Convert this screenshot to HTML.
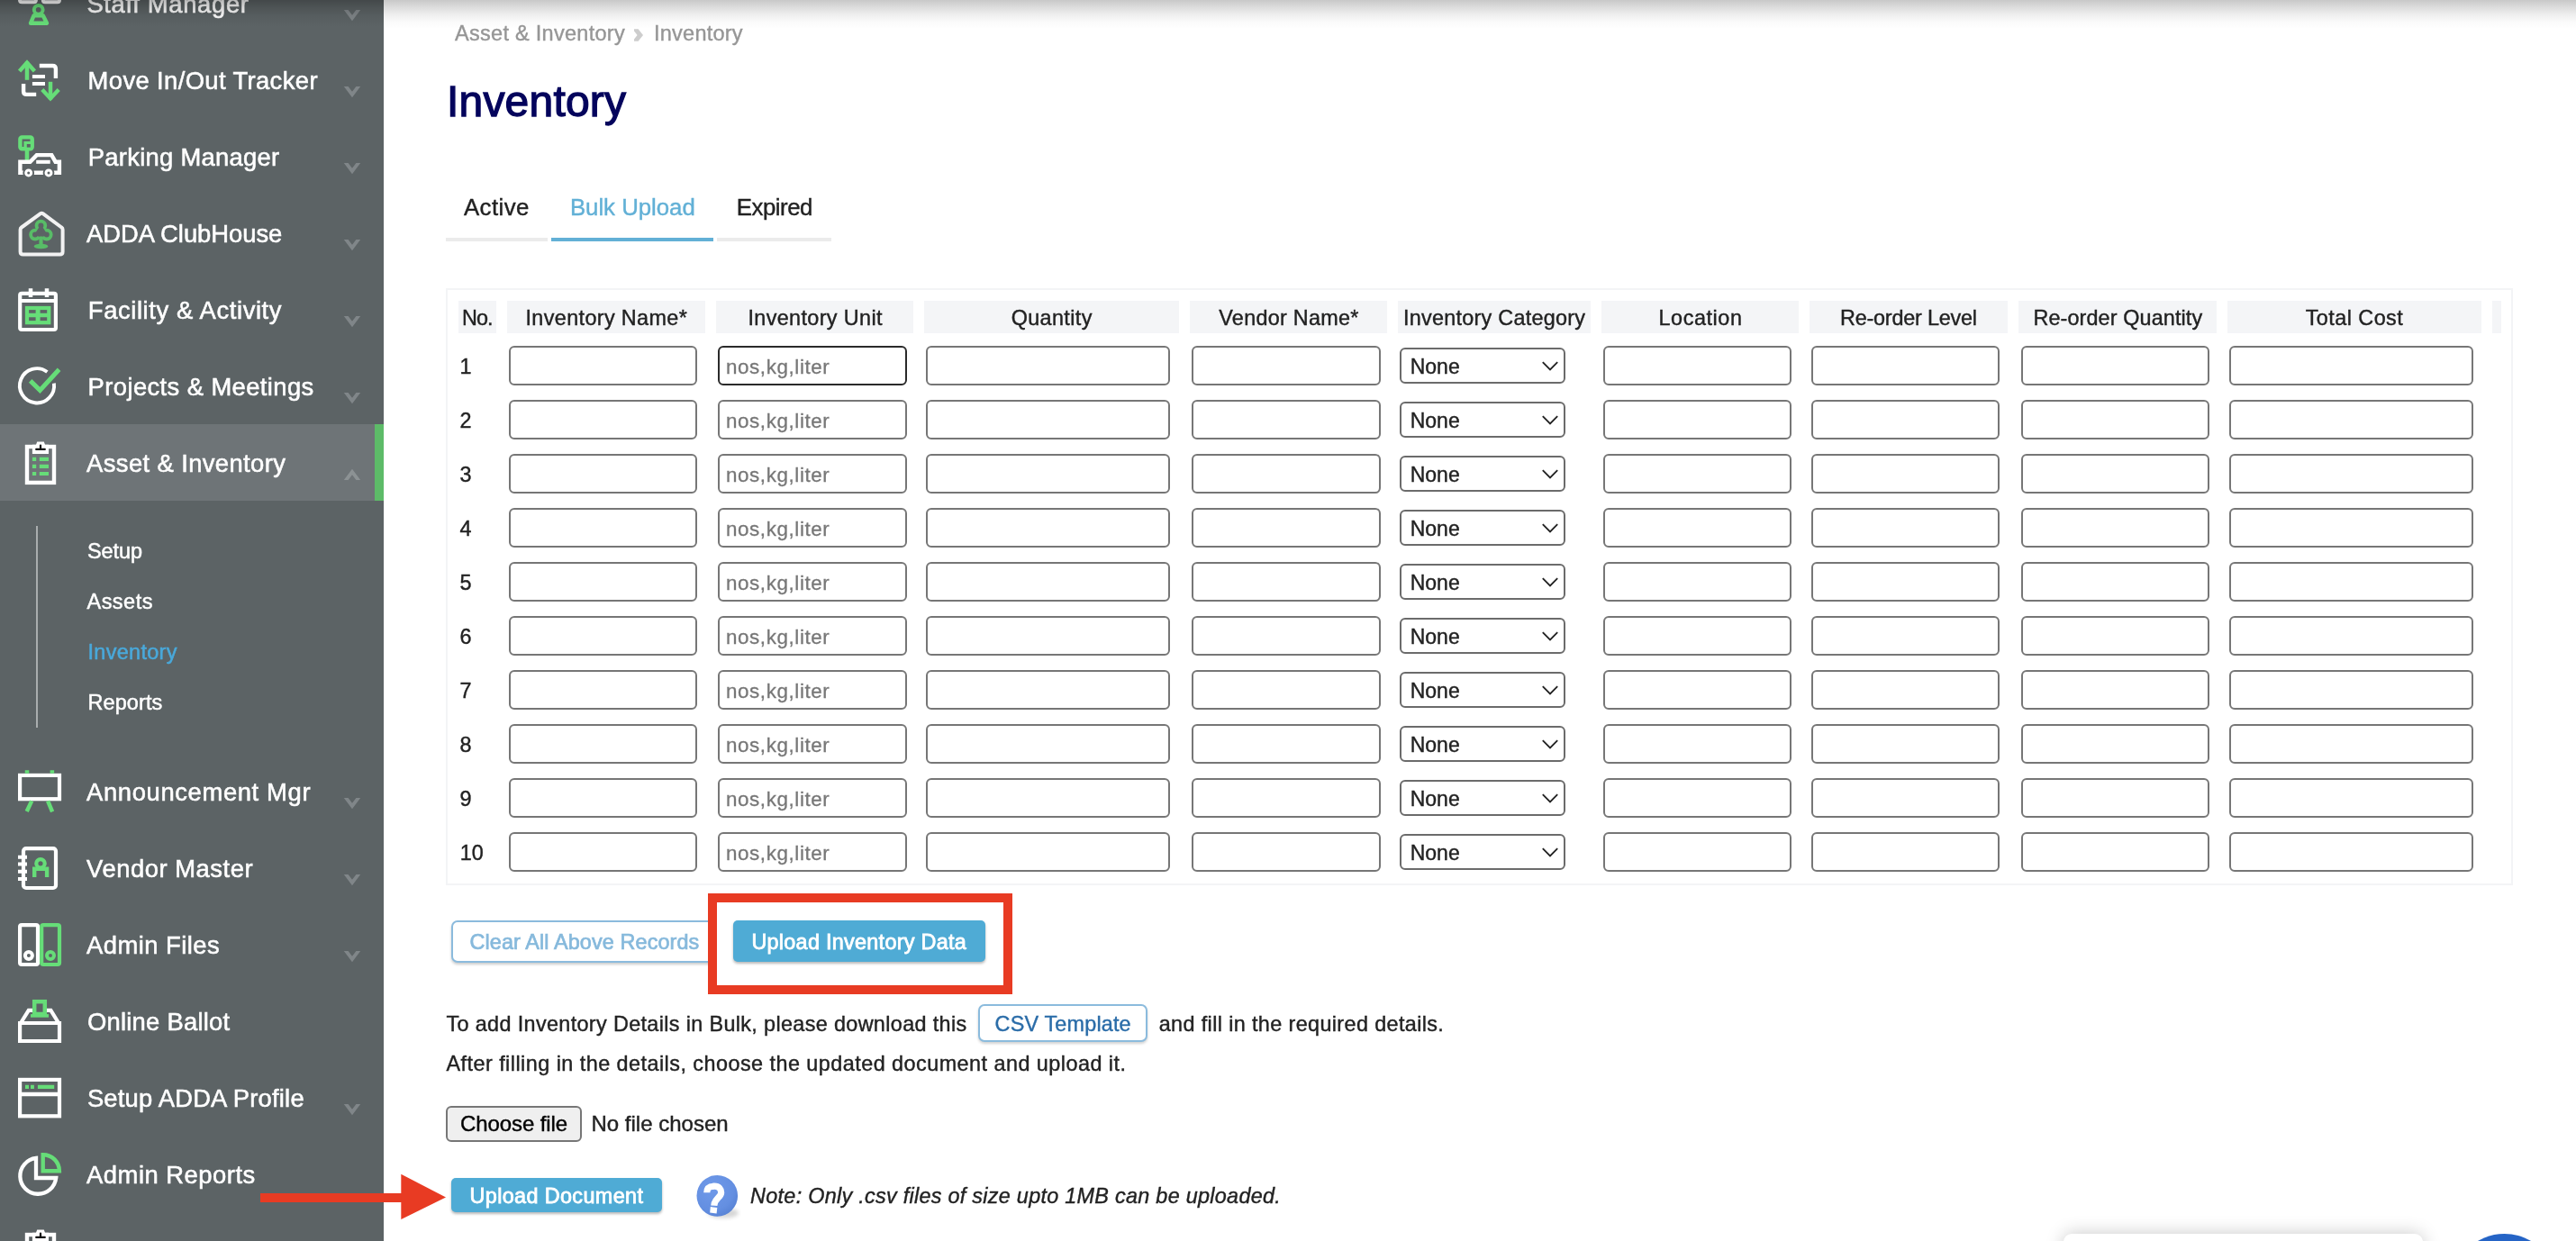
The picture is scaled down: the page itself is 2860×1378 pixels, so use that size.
<!DOCTYPE html>
<html><head><meta charset="utf-8"><title>Inventory</title>
<style>
*{box-sizing:border-box;margin:0;padding:0}
html,body{width:2860px;height:1378px;overflow:hidden;background:#fff;font-family:"Liberation Sans",sans-serif;}
body{position:relative}
#layer{position:absolute;left:0;top:0;width:2860px;height:1378px;overflow:hidden;will-change:transform}
.t{position:absolute;white-space:nowrap}
.abs{position:absolute}
#sb{position:absolute;left:0;top:0;width:426px;height:1378px;background:#5c6365;overflow:hidden}
#sb .act{position:absolute;left:0;top:471px;width:426px;height:85px;background:#6e7477}
#sb .actbar{position:absolute;left:416px;top:471px;width:10px;height:85px;background:#5dbb68}
#sb .vline{position:absolute;left:40px;top:584px;width:2px;height:224px;background:#a9adae}
.sbshadow{position:absolute;left:0;top:0;width:426px;height:30px;background:linear-gradient(to bottom,rgba(0,0,0,.27),rgba(0,0,0,.15) 30%,rgba(0,0,0,.06) 60%,rgba(0,0,0,0))}
.topshadow{position:absolute;left:426px;top:0;width:2434px;height:32px;background:linear-gradient(to bottom,#c8c8c8 0,#dcdcdc 25%,#eeeeee 50%,#fafafa 75%,#fff 100%)}
.ul{position:absolute;top:264px;height:4px;background:#ebebeb}
.ul.on{background:#62b0d6}
.tbl{position:absolute;left:495px;top:320px;width:2295px;height:663px;border:2px solid #f3f4f6}
.th{position:absolute;top:334px;height:36px;background:#f4f5f7}
.inp{position:absolute;height:43.4px;border:2px solid #767676;border-radius:6px;background:#fff}
.inp.foc{border-color:#2a2a2a}
.sel{position:absolute;width:183.6px;height:39.6px;border:2px solid #6b6b6b;border-radius:6px;background:#fff}
.btn{position:absolute;background:#4fabd5;border-radius:5px;box-shadow:0 2px 3px rgba(0,0,0,.28)}
.btn-o{position:absolute;background:#fff;border:2px solid #8bbbdd;border-radius:7px;box-shadow:0 2px 3px rgba(0,0,0,.2)}
.redbox{position:absolute;left:786px;top:992px;width:338px;height:111.6px;border:10px solid #e83b23;background:#fff}
.csv{position:absolute;left:1086px;top:1114.5px;width:187.5px;height:42.5px;border:2px solid #8bbbdd;border-radius:7px;background:#fff;box-shadow:0 2px 3px rgba(0,0,0,.18)}
.cf{position:absolute;left:495.2px;top:1228px;width:151.2px;height:39.5px;border:2px solid #767676;border-radius:6px;background:#efefef}
.card{position:absolute;left:2290.5px;top:1369.8px;width:399.5px;height:60px;background:#fff;border-radius:9px;box-shadow:0 0 20px rgba(0,0,0,.22)}
.fab{position:absolute;left:2721.5px;top:1369.8px;width:117px;height:117px;border-radius:50%;background:#2564c6}

</style></head>
<body>
<div id="layer">
<div id="sb"><div class="act"></div><div class="actbar"></div><div class="vline"></div></div>
<div class="t" style="left:96.40px;top:-13.50px;font-size:27.4px;line-height:36px;color:#fff;letter-spacing:0.666px;-webkit-text-stroke:0.55px #fff;">Staff Manager</div>
<div class="t" style="left:97.60px;top:71.50px;font-size:27.4px;line-height:36px;color:#fff;letter-spacing:0.377px;-webkit-text-stroke:0.55px #fff;">Move In/Out Tracker</div>
<div class="t" style="left:97.80px;top:156.50px;font-size:27.4px;line-height:36px;color:#fff;letter-spacing:0.275px;-webkit-text-stroke:0.55px #fff;">Parking Manager</div>
<div class="t" style="left:96.10px;top:241.50px;font-size:27.4px;line-height:36px;color:#fff;letter-spacing:-0.037px;-webkit-text-stroke:0.55px #fff;">ADDA ClubHouse</div>
<div class="t" style="left:97.80px;top:326.50px;font-size:27.4px;line-height:36px;color:#fff;letter-spacing:0.599px;-webkit-text-stroke:0.55px #fff;">Facility &amp; Activity</div>
<div class="t" style="left:97.60px;top:411.50px;font-size:27.4px;line-height:36px;color:#fff;letter-spacing:0.396px;-webkit-text-stroke:0.55px #fff;">Projects &amp; Meetings</div>
<div class="t" style="left:96.10px;top:496.50px;font-size:27.4px;line-height:36px;color:#fff;letter-spacing:0.385px;-webkit-text-stroke:0.55px #fff;">Asset &amp; Inventory</div>
<div class="t" style="left:96.10px;top:861.50px;font-size:27.4px;line-height:36px;color:#fff;letter-spacing:0.625px;-webkit-text-stroke:0.55px #fff;">Announcement Mgr</div>
<div class="t" style="left:96.10px;top:946.50px;font-size:27.4px;line-height:36px;color:#fff;letter-spacing:0.526px;-webkit-text-stroke:0.55px #fff;">Vendor Master</div>
<div class="t" style="left:96.10px;top:1031.50px;font-size:27.4px;line-height:36px;color:#fff;letter-spacing:0.446px;-webkit-text-stroke:0.55px #fff;">Admin Files</div>
<div class="t" style="left:96.90px;top:1116.50px;font-size:27.4px;line-height:36px;color:#fff;letter-spacing:0.245px;-webkit-text-stroke:0.55px #fff;">Online Ballot</div>
<div class="t" style="left:96.90px;top:1201.50px;font-size:27.4px;line-height:36px;color:#fff;letter-spacing:0.189px;-webkit-text-stroke:0.55px #fff;">Setup ADDA Profile</div>
<div class="t" style="left:96.10px;top:1286.50px;font-size:27.4px;line-height:36px;color:#fff;letter-spacing:0.498px;-webkit-text-stroke:0.55px #fff;">Admin Reports</div>
<div class="t" style="left:96.90px;top:597.30px;font-size:23.5px;line-height:31px;color:#fff;letter-spacing:-0.051px;-webkit-text-stroke:0.5px #fff;">Setup</div>
<div class="t" style="left:96.50px;top:653.30px;font-size:23.5px;line-height:31px;color:#fff;letter-spacing:0.475px;-webkit-text-stroke:0.5px #fff;">Assets</div>
<div class="t" style="left:97.50px;top:709.30px;font-size:23.5px;line-height:31px;color:#49a9db;letter-spacing:0.281px;-webkit-text-stroke:0.5px #49a9db;">Inventory</div>
<div class="t" style="left:97.50px;top:765.10px;font-size:23.5px;line-height:31px;color:#fff;letter-spacing:0.088px;-webkit-text-stroke:0.5px #fff;">Reports</div>
<svg class="abs" style="left:0;top:0" width="426" height="1378" viewBox="0 0 426 1378" fill="none" stroke-width="4.2" stroke-linejoin="round"><path d="M381.8 11 H386.6 L391 16.8 L395.4 11 H400.2 L391 23.2 Z" fill="#808689" stroke="none"/><path d="M381.8 96 H386.6 L391 101.8 L395.4 96 H400.2 L391 108.2 Z" fill="#808689" stroke="none"/><path d="M381.8 181 H386.6 L391 186.8 L395.4 181 H400.2 L391 193.2 Z" fill="#808689" stroke="none"/><path d="M381.8 266 H386.6 L391 271.8 L395.4 266 H400.2 L391 278.2 Z" fill="#808689" stroke="none"/><path d="M381.8 351 H386.6 L391 356.8 L395.4 351 H400.2 L391 363.2 Z" fill="#808689" stroke="none"/><path d="M381.8 436 H386.6 L391 441.8 L395.4 436 H400.2 L391 448.2 Z" fill="#808689" stroke="none"/><path d="M381.8 533 H386.6 L391 527.2 L395.4 533 H400.2 L391 520.8 Z" fill="#8c9294" stroke="none"/><path d="M381.8 886 H386.6 L391 891.8 L395.4 886 H400.2 L391 898.2 Z" fill="#808689" stroke="none"/><path d="M381.8 971 H386.6 L391 976.8 L395.4 971 H400.2 L391 983.2 Z" fill="#808689" stroke="none"/><path d="M381.8 1056 H386.6 L391 1061.8 L395.4 1056 H400.2 L391 1068.2 Z" fill="#808689" stroke="none"/><path d="M381.8 1226 H386.6 L391 1231.8 L395.4 1226 H400.2 L391 1238.2 Z" fill="#808689" stroke="none"/><path d="M22 -4 V0 Q22 2.2 24.2 2.2 H37.7 Q39.9 2.2 39.9 0 V-4 M47.8 -4 V0 Q47.8 2.2 50 2.2 H63.8 Q66 2.2 66 0 V-4" stroke="#ffffff" stroke-width="4"/><circle cx="42.7" cy="10.8" r="4.9" stroke="#66dd78" stroke-width="4"/><path d="M34 25.8 L37.6 17.2 H47.8 L52 25.8 Z" stroke="#66dd78" stroke-width="4.4"/><path d="M30 88.8 V68.5" stroke="#66dd78" stroke-width="4.5"/><path d="M21.6 79 L30 69.6 L38.4 79" stroke="#66dd78" stroke-width="4.4" stroke-linejoin="miter"/><path d="M56 90.8 V110.5" stroke="#66dd78" stroke-width="4.5"/><path d="M46.8 99.6 L56 109.4 L65.2 99.6" stroke="#66dd78" stroke-width="4.4" stroke-linejoin="miter"/><path d="M43.8 73 H58.4 Q61.9 73 61.9 76.5 V87.1" stroke="#ffffff" stroke-width="4.4"/><path d="M26.1 93.1 V101.4 Q26.1 104.9 29.6 104.9 H40.2" stroke="#ffffff" stroke-width="4.4"/><path d="M35.9 84.9 H50 M35.9 93.1 H50" stroke="#ffffff" stroke-width="4"/><rect x="22.4" y="152.4" width="13.3" height="12.8" rx="2" stroke="#66dd78" stroke-width="4.4"/><rect x="26.4" y="156.9" width="9" height="8" fill="#66dd78" stroke="none"/><rect x="29.8" y="160" width="4" height="3.6" fill="#5c6365" stroke="none"/><path d="M30 167 V178.4" stroke="#66dd78" stroke-width="4.6"/><path d="M22.4 179.7 H33.4 L40.8 172.1 H57.3 L61.6 179.7 H65.9 V191.7 H22.4 Z" stroke="#ffffff" stroke-width="4.4" stroke-linejoin="miter"/><path d="M40.2 179.8 H55.7" stroke="#ffffff" stroke-width="4"/><circle cx="31.7" cy="191.9" r="6.4" fill="#5c6365" stroke="none"/><circle cx="31.7" cy="191.9" r="3" stroke="#ffffff" stroke-width="3"/><circle cx="54" cy="191.9" r="6.4" fill="#5c6365" stroke="none"/><circle cx="54" cy="191.9" r="3" stroke="#ffffff" stroke-width="3"/><path d="M22.6 279.6 V255 Q22.6 253.4 23.9 252.5 L45 237.2 Q46.3 236.3 47.6 237.2 L68.3 252.5 Q69.6 253.4 69.6 255 V279.6 Q69.6 282.6 66.6 282.6 H25.6 Q22.6 282.6 22.6 279.6 Z" stroke="#f2f2f2" stroke-width="4"/><circle cx="45.4" cy="250.6" r="4.9" stroke="#58bc67" stroke-width="3.8"/><circle cx="39" cy="260.6" r="4.9" stroke="#58bc67" stroke-width="3.8"/><circle cx="51.8" cy="260.6" r="4.9" stroke="#58bc67" stroke-width="3.8"/><path d="M45.4 252 L40.5 259.5 L45.4 262.5 L50.3 259.5 Z" fill="#5c6365" stroke="#5c6365" stroke-width="3"/><path d="M45.5 262.5 V273" stroke="#58bc67" stroke-width="4.2"/><ellipse cx="45.5" cy="273.5" rx="7.9" ry="2.8" fill="#58bc67" stroke="none"/><rect x="22.2" y="325.9" width="39.7" height="40.1" rx="2" stroke="#ffffff" stroke-width="4.2"/><path d="M34 320.2 V330 M52 320.2 V330" stroke="#ffffff" stroke-width="4.5"/><path d="M22.2 334 H61.9" stroke="#ffffff" stroke-width="4"/><rect x="30" y="342" width="24.3" height="16.2" stroke="#66dd78" stroke-width="4.2" stroke-linejoin="miter"/><path d="M42.1 342 V358.2" stroke="#66dd78" stroke-width="5"/><path d="M30 350 H54.3" stroke="#66dd78" stroke-width="4.5"/><path d="M52.4 413 A19.1 19.1 0 1 0 59.9 425.6" stroke="#ffffff" stroke-width="3.9"/><path d="M33.7 422.9 L44.4 433.4 L65.6 410.2" stroke="#66dd78" stroke-width="5" stroke-linejoin="miter"/><g transform="translate(0,0)"><rect x="30" y="496" width="30" height="39.9" stroke="#ffffff" stroke-width="4.4" stroke-linejoin="miter"/><path d="M35.9 493.8 H40 L41.2 490.6 H48.8 L50 493.8 H54 V504 H35.9 Z" fill="#ffffff" stroke="none"/><path d="M40.2 498.9 H49.8 M45 494.6 V498.9" stroke="#111" stroke-width="2.2" stroke-linecap="round"/><path d="M35.9 509.9 H40.2 M43.8 509.9 H54" stroke="#66dd78" stroke-width="4.2"/><path d="M35.9 517.9 H40.2 M43.8 517.9 H54" stroke="#66dd78" stroke-width="4.2"/><path d="M35.9 526 H40.2 M43.8 526 H54" stroke="#66dd78" stroke-width="4.2"/></g><rect x="22.1" y="860.9" width="43.9" height="26.3" stroke="#ffffff" stroke-width="4.2" stroke-linejoin="miter"/><path d="M30 855.2 V858.8 M57.9 855.2 V858.8 M35.2 889.4 L29.7 901 M53.1 889.4 L58.1 901.4" stroke="#66dd78" stroke-width="4.5"/><rect x="26" y="942.2" width="36" height="43.8" rx="3" stroke="#ffffff" stroke-width="4.2"/><path d="M20 951.7 H30 M20 959.6 H30 M20 967.8 H30 M20 976 H30" stroke="#ffffff" stroke-width="4"/><circle cx="45" cy="958.8" r="4.7" stroke="#66dd78" stroke-width="4.2"/><path d="M38.2 974 V964.8 H52.1 V974" stroke="#66dd78" stroke-width="4.4" stroke-linejoin="miter"/><rect x="22.1" y="1027.1" width="19.9" height="43.9" rx="2" stroke="#ffffff" stroke-width="4.2"/><circle cx="31.9" cy="1061" r="4" stroke="#ffffff" stroke-width="4"/><rect x="46.2" y="1027.1" width="19.8" height="43.9" rx="2" stroke="#66dd78" stroke-width="4.2"/><circle cx="56" cy="1061" r="4" stroke="#66dd78" stroke-width="4"/><path d="M22.1 1136 H66 V1156 H22.1 Z" stroke="#ffffff" stroke-width="4.2" stroke-linejoin="miter"/><path d="M23.6 1135 L31.8 1121.9 H36 M64.5 1135 L56.4 1121.9 H52" stroke="#ffffff" stroke-width="4.2" stroke-linejoin="miter"/><rect x="38.2" y="1112.2" width="11.6" height="13.8" stroke="#66dd78" stroke-width="4.5" stroke-linejoin="miter"/><path d="M34 1127.9 H54" stroke="#66dd78" stroke-width="3.6"/><rect x="22.1" y="1198.9" width="43.9" height="40.4" stroke="#ffffff" stroke-width="4.2" stroke-linejoin="miter"/><path d="M22.1 1214.9 H66" stroke="#ffffff" stroke-width="4.5"/><path d="M28 1206.9 H32 M34 1206.9 H37.9 M41.9 1206.9 H60.2" stroke="#66dd78" stroke-width="4.2"/><path d="M40 1285.9 V1308 H62.2 A20 20 0 1 1 40 1285.9 Z" stroke="#ffffff" stroke-width="4.3" stroke-linejoin="miter"/><path d="M47.7 1282.2 V1300.2 H65.9 A18.1 18.1 0 0 0 47.7 1282.2 Z" stroke="#66dd78" stroke-width="4.4" stroke-linejoin="miter"/><g transform="translate(0,875)"><rect x="30" y="496" width="30" height="39.9" stroke="#ffffff" stroke-width="4.4" stroke-linejoin="miter"/><path d="M35.9 493.8 H40 L41.2 490.6 H48.8 L50 493.8 H54 V504 H35.9 Z" fill="#ffffff" stroke="none"/><path d="M40.2 498.9 H49.8 M45 494.6 V498.9" stroke="#111" stroke-width="2.2" stroke-linecap="round"/><path d="M35.9 509.9 H40.2 M43.8 509.9 H54" stroke="#66dd78" stroke-width="4.2"/><path d="M35.9 517.9 H40.2 M43.8 517.9 H54" stroke="#66dd78" stroke-width="4.2"/><path d="M35.9 526 H40.2 M43.8 526 H54" stroke="#66dd78" stroke-width="4.2"/></g></svg>
<div class="sbshadow"></div>
<div class="topshadow"></div>
<div class="t" style="left:505.00px;top:21.50px;font-size:23.5px;line-height:31px;color:#969696;letter-spacing:0.283px;-webkit-text-stroke:0.4px #969696;">Asset &amp; Inventory</div>
<svg class="abs" style="left:700px;top:28px" width="20" height="22" viewBox="700 28 20 22"><path d="M704 32.2 L708.6 32.2 L714 39 L708.6 45.8 L704 45.8 L704 43.4 L707.6 39 L704 34.6 Z" fill="#cdcdcd"/></svg>
<div class="t" style="left:726.00px;top:21.50px;font-size:23.5px;line-height:31px;color:#969696;letter-spacing:0.243px;-webkit-text-stroke:0.4px #969696;">Inventory</div>
<div class="t" style="left:496.00px;top:81.70px;font-size:48px;line-height:62px;color:#04045c;letter-spacing:0.197px;-webkit-text-stroke:1.3px #04045c;">Inventory</div>
<div class="ul" style="left:495px;width:113px"></div><div class="ul on" style="left:612px;width:180px"></div><div class="ul" style="left:796px;width:127px"></div>
<div class="t" style="left:515.00px;top:212.90px;font-size:25.8px;line-height:34px;color:#222;letter-spacing:0.409px;-webkit-text-stroke:0.4px #222;">Active</div>
<div class="t" style="left:632.90px;top:212.90px;font-size:25.8px;line-height:34px;color:#62b0d6;letter-spacing:-0.021px;-webkit-text-stroke:0.4px #62b0d6;">Bulk Upload</div>
<div class="t" style="left:817.70px;top:212.90px;font-size:25.8px;line-height:34px;color:#222;letter-spacing:-0.448px;-webkit-text-stroke:0.4px #222;">Expired</div>
<div class="tbl"></div>
<div class="th" style="left:509px;width:42px"></div>
<div class="th" style="left:563px;width:220px"></div>
<div class="th" style="left:795px;width:219px"></div>
<div class="th" style="left:1026px;width:283px"></div>
<div class="th" style="left:1321px;width:219px"></div>
<div class="th" style="left:1552px;width:214px"></div>
<div class="th" style="left:1778px;width:219px"></div>
<div class="th" style="left:2009px;width:220px"></div>
<div class="th" style="left:2241px;width:220px"></div>
<div class="th" style="left:2473px;width:282px"></div>
<div class="th" style="left:2767px;width:10px"></div>
<div class="t" style="left:513.00px;top:337.90px;font-size:23.4px;line-height:30px;color:#222;letter-spacing:-1.005px;-webkit-text-stroke:0.4px #222;">No.</div>
<div class="t" style="left:583.50px;top:337.90px;font-size:23.4px;line-height:30px;color:#222;letter-spacing:0.365px;-webkit-text-stroke:0.4px #222;">Inventory Name*</div>
<div class="t" style="left:830.40px;top:337.90px;font-size:23.4px;line-height:30px;color:#222;letter-spacing:0.365px;-webkit-text-stroke:0.4px #222;">Inventory Unit</div>
<div class="t" style="left:1122.70px;top:337.90px;font-size:23.4px;line-height:30px;color:#222;letter-spacing:0.365px;-webkit-text-stroke:0.4px #222;">Quantity</div>
<div class="t" style="left:1353.30px;top:337.90px;font-size:23.4px;line-height:30px;color:#222;letter-spacing:0.264px;-webkit-text-stroke:0.4px #222;">Vendor Name*</div>
<div class="t" style="left:1558.00px;top:337.90px;font-size:23.4px;line-height:30px;color:#222;letter-spacing:0.253px;-webkit-text-stroke:0.4px #222;">Inventory Category</div>
<div class="t" style="left:1841.50px;top:337.90px;font-size:23.4px;line-height:30px;color:#222;letter-spacing:0.575px;-webkit-text-stroke:0.4px #222;">Location</div>
<div class="t" style="left:2043.00px;top:337.90px;font-size:23.4px;line-height:30px;color:#222;letter-spacing:-0.213px;-webkit-text-stroke:0.4px #222;">Re-order Level</div>
<div class="t" style="left:2257.40px;top:337.90px;font-size:23.4px;line-height:30px;color:#222;letter-spacing:0.114px;-webkit-text-stroke:0.4px #222;">Re-order Quantity</div>
<div class="t" style="left:2559.70px;top:337.90px;font-size:23.4px;line-height:30px;color:#222;letter-spacing:0.452px;-webkit-text-stroke:0.4px #222;">Total Cost</div>
<div class="t" style="left:510.50px;top:391.70px;font-size:23.4px;line-height:30px;color:#222;letter-spacing:0.000px;-webkit-text-stroke:0.4px #222;">1</div>
<div class="inp" style="left:565.3px;width:209.2px;top:384.3px"></div>
<div class="inp foc" style="left:797.3px;width:209.4px;top:384.3px"></div>
<div class="t" style="left:806.00px;top:392.70px;font-size:22.4px;line-height:29px;color:#777;letter-spacing:0.591px;-webkit-text-stroke:0.3px #777;">nos,kg,liter</div>
<div class="inp" style="left:1028.4px;width:270.4px;top:384.3px"></div>
<div class="inp" style="left:1323.3px;width:209.7px;top:384.3px"></div>
<div class="sel" style="left:1554px;top:386px"></div>
<div class="t" style="left:1565.70px;top:391.60px;font-size:23px;line-height:30px;color:#222;letter-spacing:0.002px;-webkit-text-stroke:0.4px #222;">None</div>
<svg class="abs" style="left:1710px;top:400px" width="22" height="14" viewBox="0 0 22 14"><path d="M2.8 2.2 L11 10.4 L19.2 2.2" fill="none" stroke="#222" stroke-width="1.9"/></svg>
<div class="inp" style="left:1780.2px;width:209.2px;top:384.3px"></div>
<div class="inp" style="left:2011.0px;width:209.0px;top:384.3px"></div>
<div class="inp" style="left:2243.5px;width:209.1px;top:384.3px"></div>
<div class="inp" style="left:2475.3px;width:270.7px;top:384.3px"></div>
<div class="t" style="left:510.60px;top:451.70px;font-size:23.4px;line-height:30px;color:#222;letter-spacing:0.000px;-webkit-text-stroke:0.4px #222;">2</div>
<div class="inp" style="left:565.3px;width:209.2px;top:444.3px"></div>
<div class="inp" style="left:797.3px;width:209.4px;top:444.3px"></div>
<div class="t" style="left:806.00px;top:452.70px;font-size:22.4px;line-height:29px;color:#777;letter-spacing:0.591px;-webkit-text-stroke:0.3px #777;">nos,kg,liter</div>
<div class="inp" style="left:1028.4px;width:270.4px;top:444.3px"></div>
<div class="inp" style="left:1323.3px;width:209.7px;top:444.3px"></div>
<div class="sel" style="left:1554px;top:446px"></div>
<div class="t" style="left:1565.70px;top:451.60px;font-size:23px;line-height:30px;color:#222;letter-spacing:0.002px;-webkit-text-stroke:0.4px #222;">None</div>
<svg class="abs" style="left:1710px;top:460px" width="22" height="14" viewBox="0 0 22 14"><path d="M2.8 2.2 L11 10.4 L19.2 2.2" fill="none" stroke="#222" stroke-width="1.9"/></svg>
<div class="inp" style="left:1780.2px;width:209.2px;top:444.3px"></div>
<div class="inp" style="left:2011.0px;width:209.0px;top:444.3px"></div>
<div class="inp" style="left:2243.5px;width:209.1px;top:444.3px"></div>
<div class="inp" style="left:2475.3px;width:270.7px;top:444.3px"></div>
<div class="t" style="left:510.60px;top:511.70px;font-size:23.4px;line-height:30px;color:#222;letter-spacing:0.000px;-webkit-text-stroke:0.4px #222;">3</div>
<div class="inp" style="left:565.3px;width:209.2px;top:504.3px"></div>
<div class="inp" style="left:797.3px;width:209.4px;top:504.3px"></div>
<div class="t" style="left:806.00px;top:512.70px;font-size:22.4px;line-height:29px;color:#777;letter-spacing:0.591px;-webkit-text-stroke:0.3px #777;">nos,kg,liter</div>
<div class="inp" style="left:1028.4px;width:270.4px;top:504.3px"></div>
<div class="inp" style="left:1323.3px;width:209.7px;top:504.3px"></div>
<div class="sel" style="left:1554px;top:506px"></div>
<div class="t" style="left:1565.70px;top:511.60px;font-size:23px;line-height:30px;color:#222;letter-spacing:0.002px;-webkit-text-stroke:0.4px #222;">None</div>
<svg class="abs" style="left:1710px;top:520px" width="22" height="14" viewBox="0 0 22 14"><path d="M2.8 2.2 L11 10.4 L19.2 2.2" fill="none" stroke="#222" stroke-width="1.9"/></svg>
<div class="inp" style="left:1780.2px;width:209.2px;top:504.3px"></div>
<div class="inp" style="left:2011.0px;width:209.0px;top:504.3px"></div>
<div class="inp" style="left:2243.5px;width:209.1px;top:504.3px"></div>
<div class="inp" style="left:2475.3px;width:270.7px;top:504.3px"></div>
<div class="t" style="left:510.60px;top:571.70px;font-size:23.4px;line-height:30px;color:#222;letter-spacing:0.000px;-webkit-text-stroke:0.4px #222;">4</div>
<div class="inp" style="left:565.3px;width:209.2px;top:564.3px"></div>
<div class="inp" style="left:797.3px;width:209.4px;top:564.3px"></div>
<div class="t" style="left:806.00px;top:572.70px;font-size:22.4px;line-height:29px;color:#777;letter-spacing:0.591px;-webkit-text-stroke:0.3px #777;">nos,kg,liter</div>
<div class="inp" style="left:1028.4px;width:270.4px;top:564.3px"></div>
<div class="inp" style="left:1323.3px;width:209.7px;top:564.3px"></div>
<div class="sel" style="left:1554px;top:566px"></div>
<div class="t" style="left:1565.70px;top:571.60px;font-size:23px;line-height:30px;color:#222;letter-spacing:0.002px;-webkit-text-stroke:0.4px #222;">None</div>
<svg class="abs" style="left:1710px;top:580px" width="22" height="14" viewBox="0 0 22 14"><path d="M2.8 2.2 L11 10.4 L19.2 2.2" fill="none" stroke="#222" stroke-width="1.9"/></svg>
<div class="inp" style="left:1780.2px;width:209.2px;top:564.3px"></div>
<div class="inp" style="left:2011.0px;width:209.0px;top:564.3px"></div>
<div class="inp" style="left:2243.5px;width:209.1px;top:564.3px"></div>
<div class="inp" style="left:2475.3px;width:270.7px;top:564.3px"></div>
<div class="t" style="left:510.60px;top:631.70px;font-size:23.4px;line-height:30px;color:#222;letter-spacing:0.000px;-webkit-text-stroke:0.4px #222;">5</div>
<div class="inp" style="left:565.3px;width:209.2px;top:624.3px"></div>
<div class="inp" style="left:797.3px;width:209.4px;top:624.3px"></div>
<div class="t" style="left:806.00px;top:632.70px;font-size:22.4px;line-height:29px;color:#777;letter-spacing:0.591px;-webkit-text-stroke:0.3px #777;">nos,kg,liter</div>
<div class="inp" style="left:1028.4px;width:270.4px;top:624.3px"></div>
<div class="inp" style="left:1323.3px;width:209.7px;top:624.3px"></div>
<div class="sel" style="left:1554px;top:626px"></div>
<div class="t" style="left:1565.70px;top:631.60px;font-size:23px;line-height:30px;color:#222;letter-spacing:0.002px;-webkit-text-stroke:0.4px #222;">None</div>
<svg class="abs" style="left:1710px;top:640px" width="22" height="14" viewBox="0 0 22 14"><path d="M2.8 2.2 L11 10.4 L19.2 2.2" fill="none" stroke="#222" stroke-width="1.9"/></svg>
<div class="inp" style="left:1780.2px;width:209.2px;top:624.3px"></div>
<div class="inp" style="left:2011.0px;width:209.0px;top:624.3px"></div>
<div class="inp" style="left:2243.5px;width:209.1px;top:624.3px"></div>
<div class="inp" style="left:2475.3px;width:270.7px;top:624.3px"></div>
<div class="t" style="left:510.60px;top:691.70px;font-size:23.4px;line-height:30px;color:#222;letter-spacing:0.000px;-webkit-text-stroke:0.4px #222;">6</div>
<div class="inp" style="left:565.3px;width:209.2px;top:684.3px"></div>
<div class="inp" style="left:797.3px;width:209.4px;top:684.3px"></div>
<div class="t" style="left:806.00px;top:692.70px;font-size:22.4px;line-height:29px;color:#777;letter-spacing:0.591px;-webkit-text-stroke:0.3px #777;">nos,kg,liter</div>
<div class="inp" style="left:1028.4px;width:270.4px;top:684.3px"></div>
<div class="inp" style="left:1323.3px;width:209.7px;top:684.3px"></div>
<div class="sel" style="left:1554px;top:686px"></div>
<div class="t" style="left:1565.70px;top:691.60px;font-size:23px;line-height:30px;color:#222;letter-spacing:0.002px;-webkit-text-stroke:0.4px #222;">None</div>
<svg class="abs" style="left:1710px;top:700px" width="22" height="14" viewBox="0 0 22 14"><path d="M2.8 2.2 L11 10.4 L19.2 2.2" fill="none" stroke="#222" stroke-width="1.9"/></svg>
<div class="inp" style="left:1780.2px;width:209.2px;top:684.3px"></div>
<div class="inp" style="left:2011.0px;width:209.0px;top:684.3px"></div>
<div class="inp" style="left:2243.5px;width:209.1px;top:684.3px"></div>
<div class="inp" style="left:2475.3px;width:270.7px;top:684.3px"></div>
<div class="t" style="left:510.60px;top:751.70px;font-size:23.4px;line-height:30px;color:#222;letter-spacing:0.000px;-webkit-text-stroke:0.4px #222;">7</div>
<div class="inp" style="left:565.3px;width:209.2px;top:744.3px"></div>
<div class="inp" style="left:797.3px;width:209.4px;top:744.3px"></div>
<div class="t" style="left:806.00px;top:752.70px;font-size:22.4px;line-height:29px;color:#777;letter-spacing:0.591px;-webkit-text-stroke:0.3px #777;">nos,kg,liter</div>
<div class="inp" style="left:1028.4px;width:270.4px;top:744.3px"></div>
<div class="inp" style="left:1323.3px;width:209.7px;top:744.3px"></div>
<div class="sel" style="left:1554px;top:746px"></div>
<div class="t" style="left:1565.70px;top:751.60px;font-size:23px;line-height:30px;color:#222;letter-spacing:0.002px;-webkit-text-stroke:0.4px #222;">None</div>
<svg class="abs" style="left:1710px;top:760px" width="22" height="14" viewBox="0 0 22 14"><path d="M2.8 2.2 L11 10.4 L19.2 2.2" fill="none" stroke="#222" stroke-width="1.9"/></svg>
<div class="inp" style="left:1780.2px;width:209.2px;top:744.3px"></div>
<div class="inp" style="left:2011.0px;width:209.0px;top:744.3px"></div>
<div class="inp" style="left:2243.5px;width:209.1px;top:744.3px"></div>
<div class="inp" style="left:2475.3px;width:270.7px;top:744.3px"></div>
<div class="t" style="left:510.60px;top:811.70px;font-size:23.4px;line-height:30px;color:#222;letter-spacing:0.000px;-webkit-text-stroke:0.4px #222;">8</div>
<div class="inp" style="left:565.3px;width:209.2px;top:804.3px"></div>
<div class="inp" style="left:797.3px;width:209.4px;top:804.3px"></div>
<div class="t" style="left:806.00px;top:812.70px;font-size:22.4px;line-height:29px;color:#777;letter-spacing:0.591px;-webkit-text-stroke:0.3px #777;">nos,kg,liter</div>
<div class="inp" style="left:1028.4px;width:270.4px;top:804.3px"></div>
<div class="inp" style="left:1323.3px;width:209.7px;top:804.3px"></div>
<div class="sel" style="left:1554px;top:806px"></div>
<div class="t" style="left:1565.70px;top:811.60px;font-size:23px;line-height:30px;color:#222;letter-spacing:0.002px;-webkit-text-stroke:0.4px #222;">None</div>
<svg class="abs" style="left:1710px;top:820px" width="22" height="14" viewBox="0 0 22 14"><path d="M2.8 2.2 L11 10.4 L19.2 2.2" fill="none" stroke="#222" stroke-width="1.9"/></svg>
<div class="inp" style="left:1780.2px;width:209.2px;top:804.3px"></div>
<div class="inp" style="left:2011.0px;width:209.0px;top:804.3px"></div>
<div class="inp" style="left:2243.5px;width:209.1px;top:804.3px"></div>
<div class="inp" style="left:2475.3px;width:270.7px;top:804.3px"></div>
<div class="t" style="left:510.60px;top:871.70px;font-size:23.4px;line-height:30px;color:#222;letter-spacing:0.000px;-webkit-text-stroke:0.4px #222;">9</div>
<div class="inp" style="left:565.3px;width:209.2px;top:864.3px"></div>
<div class="inp" style="left:797.3px;width:209.4px;top:864.3px"></div>
<div class="t" style="left:806.00px;top:872.70px;font-size:22.4px;line-height:29px;color:#777;letter-spacing:0.591px;-webkit-text-stroke:0.3px #777;">nos,kg,liter</div>
<div class="inp" style="left:1028.4px;width:270.4px;top:864.3px"></div>
<div class="inp" style="left:1323.3px;width:209.7px;top:864.3px"></div>
<div class="sel" style="left:1554px;top:866px"></div>
<div class="t" style="left:1565.70px;top:871.60px;font-size:23px;line-height:30px;color:#222;letter-spacing:0.002px;-webkit-text-stroke:0.4px #222;">None</div>
<svg class="abs" style="left:1710px;top:880px" width="22" height="14" viewBox="0 0 22 14"><path d="M2.8 2.2 L11 10.4 L19.2 2.2" fill="none" stroke="#222" stroke-width="1.9"/></svg>
<div class="inp" style="left:1780.2px;width:209.2px;top:864.3px"></div>
<div class="inp" style="left:2011.0px;width:209.0px;top:864.3px"></div>
<div class="inp" style="left:2243.5px;width:209.1px;top:864.3px"></div>
<div class="inp" style="left:2475.3px;width:270.7px;top:864.3px"></div>
<div class="t" style="left:510.80px;top:931.70px;font-size:23.4px;line-height:30px;color:#222;letter-spacing:0.000px;-webkit-text-stroke:0.4px #222;">10</div>
<div class="inp" style="left:565.3px;width:209.2px;top:924.3px"></div>
<div class="inp" style="left:797.3px;width:209.4px;top:924.3px"></div>
<div class="t" style="left:806.00px;top:932.70px;font-size:22.4px;line-height:29px;color:#777;letter-spacing:0.591px;-webkit-text-stroke:0.3px #777;">nos,kg,liter</div>
<div class="inp" style="left:1028.4px;width:270.4px;top:924.3px"></div>
<div class="inp" style="left:1323.3px;width:209.7px;top:924.3px"></div>
<div class="sel" style="left:1554px;top:926px"></div>
<div class="t" style="left:1565.70px;top:931.60px;font-size:23px;line-height:30px;color:#222;letter-spacing:0.002px;-webkit-text-stroke:0.4px #222;">None</div>
<svg class="abs" style="left:1710px;top:940px" width="22" height="14" viewBox="0 0 22 14"><path d="M2.8 2.2 L11 10.4 L19.2 2.2" fill="none" stroke="#222" stroke-width="1.9"/></svg>
<div class="inp" style="left:1780.2px;width:209.2px;top:924.3px"></div>
<div class="inp" style="left:2011.0px;width:209.0px;top:924.3px"></div>
<div class="inp" style="left:2243.5px;width:209.1px;top:924.3px"></div>
<div class="inp" style="left:2475.3px;width:270.7px;top:924.3px"></div>
<div class="btn-o" style="left:501px;top:1022px;width:300px;height:47px"></div>
<div class="t" style="left:521.50px;top:1031.40px;font-size:23.4px;line-height:30px;color:#86b9dc;letter-spacing:0.117px;-webkit-text-stroke:0.7px #86b9dc;">Clear All Above Records</div>
<div class="redbox"></div>
<div class="btn" style="left:814px;top:1022px;width:280px;height:46px"></div>
<div class="t" style="left:834.40px;top:1031.40px;font-size:23.4px;line-height:30px;color:#fff;letter-spacing:0.282px;-webkit-text-stroke:0.8px #fff;">Upload Inventory Data</div>
<div class="t" style="left:495.50px;top:1121.90px;font-size:23.4px;line-height:30px;color:#222;letter-spacing:0.350px;-webkit-text-stroke:0.4px #222;">To add Inventory Details in Bulk, please download this</div>
<div class="csv"></div>
<div class="t" style="left:1104.60px;top:1122.00px;font-size:23.4px;line-height:30px;color:#2a6ca8;letter-spacing:0.177px;-webkit-text-stroke:0.4px #2a6ca8;">CSV Template</div>
<div class="t" style="left:1286.70px;top:1122.00px;font-size:23.4px;line-height:30px;color:#222;letter-spacing:0.372px;-webkit-text-stroke:0.4px #222;">and fill in the required details.</div>
<div class="t" style="left:495.50px;top:1165.90px;font-size:23.4px;line-height:30px;color:#222;letter-spacing:0.461px;-webkit-text-stroke:0.4px #222;">After filling in the details, choose the updated document and upload it.</div>
<div class="cf"></div>
<div class="t" style="left:510.90px;top:1231.90px;font-size:24px;line-height:31px;color:#000;letter-spacing:-0.077px;-webkit-text-stroke:0.4px #000;">Choose file</div>
<div class="t" style="left:656.50px;top:1231.90px;font-size:24px;line-height:31px;color:#222;letter-spacing:0.001px;-webkit-text-stroke:0.4px #222;">No file chosen</div>
<div class="btn" style="left:501px;top:1307.5px;width:234px;height:38.5px"></div>
<div class="t" style="left:521.50px;top:1312.60px;font-size:23.4px;line-height:30px;color:#fff;letter-spacing:0.372px;-webkit-text-stroke:0.8px #fff;">Upload Document</div>
<svg class="abs" style="left:764px;top:1296px" width="66" height="68" viewBox="764 1296 66 68"><defs><radialGradient id="qg" cx="38%" cy="32%" r="75%"><stop offset="0" stop-color="#6f99e9"/><stop offset="0.7" stop-color="#648fe1"/><stop offset="1" stop-color="#5681d4"/></radialGradient><filter id="qb" x="-50%" y="-50%" width="200%" height="200%"><feGaussianBlur stdDeviation="2.2"/></filter></defs><ellipse cx="803" cy="1347" rx="17" ry="5.5" fill="#000" opacity=".16" filter="url(#qb)"/><ellipse cx="796.3" cy="1327.8" rx="22.8" ry="22.9" fill="url(#qg)"/><path d="M784.8 1324.2 C784.8 1318.6 788.6 1317.2 793.2 1317.2 C798 1317.2 800.9 1320.4 800.6 1324.8 C800.3 1329.6 793.4 1330.6 792.8 1338.8" fill="none" stroke="#fff" stroke-width="7.2"/><path d="M788.8 1340 L796.3 1341 L795.6 1347.4 L788.2 1346.4 Z" fill="#fff"/></svg>
<div class="t" style="left:833.10px;top:1313.10px;font-size:23.4px;line-height:30px;color:#222;letter-spacing:0.283px;font-style:italic;-webkit-text-stroke:0.4px #222;">Note: Only .csv files of size upto 1MB can be uploaded.</div>
<div class="card"></div><div class="fab"></div>
<svg class="abs" style="left:280px;top:1300px" width="220" height="60" viewBox="280 1300 220 60"><rect x="289" y="1325" width="160" height="10" fill="#e83b23"/><path d="M445.3 1303.8 L495 1329.5 L445.3 1354 Z" fill="#e83b23"/></svg>
</div>
</body></html>
